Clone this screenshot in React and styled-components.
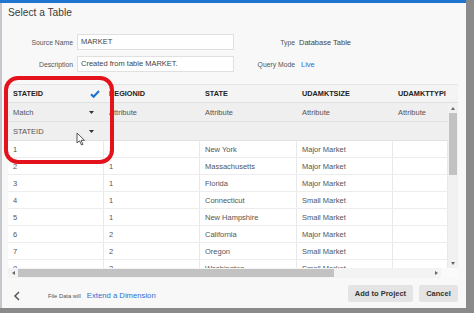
import React from "react";
import styled, { createGlobalStyle } from "styled-components";

const Global = createGlobalStyle`
  html, body { margin: 0; padding: 0; }
  body {
    background: #8a8a8a;
    font-family: "Liberation Sans", Arial, sans-serif;
    -webkit-font-smoothing: antialiased;
    overflow: hidden;
    width: 474px;
    height: 313px;
  }
  * { box-sizing: border-box; }
`;

const Frame = styled.div`
  position: relative;
  width: 466px;
  height: 308px;
  display: flex;
  flex-direction: column;
  background: #f8f8f8;
`;

const TopBar = styled.div`
  height: 3px;
  background: #1f74d0;
  flex: none;
`;

const Dialog = styled.div`
  flex: 1;
  display: flex;
  flex-direction: column;
  border-left: 2px solid #c6c7cc;
`;

const Title = styled.div`
  height: 20px;
  line-height: 20px;
  padding-left: 6px;
  font-size: 10.2px;
  color: #3a3a3a;
`;

const Form = styled.div`
  margin-top: 11px;
  display: grid;
  grid-template-columns: 71px 157px 57px 1fr;
  grid-auto-rows: 16px;
  column-gap: 4px;
  row-gap: 6px;
  align-items: center;
`;

const Label = styled.div`
  text-align: right;
  font-size: 6.8px;
  color: #555;
`;

const Input = styled.div`
  height: 16px;
  background: #fff;
  border: 1px solid #e0e0e0;
  font-size: 7.5px;
  color: #444;
  line-height: 14px;
  padding-left: 3px;
`;

const Value = styled.div`
  font-size: 7.5px;
  color: ${(p) => (p.$link ? "#2f6fd1" : "#444")};
  padding-left: ${(p) => (p.$link ? "2px" : "0")};
`;

const Table = styled.div`
  margin: 12px 0 0 6px;
  width: 450px;
  display: flex;
  flex-direction: column;
`;

const cols = "96px 96px 97px 96px 55px";

const HeaderRow = styled.div`
  display: flex;
  height: 19px;
  background: #f4f4f4;
  border-top: 1px solid #e6e6e6;
  border-bottom: 1px solid #e0e0e0;
`;

const HeaderGrid = styled.div`
  width: 440px;
  display: grid;
  grid-template-columns: ${cols};
  overflow: hidden;
`;

const HeaderCell = styled.div`
  display: flex;
  align-items: center;
  justify-content: space-between;
  padding: 0 4px 0 5px;
  font-size: 7.3px;
  font-weight: bold;
  color: #222;
  white-space: nowrap;
  overflow: hidden;
`;

const Body = styled.div`
  display: flex;
  height: 165px;
`;

const Rows = styled.div`
  width: 440px;
  overflow: hidden;
  background: #fff;
`;

const Row = styled.div`
  display: grid;
  grid-template-columns: ${cols};
  height: ${(p) => (p.$meta ? "19px" : "17px")};
  background: ${(p) => (p.$meta ? "#efefef" : "#fff")};
  border-bottom: 1px solid ${(p) => (p.$meta ? "#e2e2e2" : "#ededed")};
`;

const Cell = styled.div`
  display: flex;
  align-items: center;
  justify-content: space-between;
  padding: 0 9px 0 5px;
  font-size: 7.5px;
  color: #555;
  white-space: nowrap;
  overflow: hidden;
  border-right: 1px solid ${(p) => (p.$meta ? "transparent" : "#e8e8e8")};
`;

const VScroll = styled.div`
  width: 10px;
  background: #f1f1f1;
  display: flex;
  flex-direction: column;
  align-items: center;
`;

const ScrollArrow = styled.div`
  height: 10px;
  width: 10px;
  display: flex;
  align-items: center;
  justify-content: center;
  flex: none;
`;

const VTrack = styled.div`
  flex: 1;
  width: 100%;
  display: flex;
  flex-direction: column;
  align-items: center;
`;

const VThumb = styled.div`
  width: 8px;
  height: 62px;
  background: #c2c2c2;
`;

const HScroll = styled.div`
  display: flex;
  height: 10px;
  background: #f3f3f3;
  align-items: center;
`;

const HTrack = styled.div`
  flex: 1;
  height: 100%;
  display: flex;
  align-items: center;
`;

const HThumb = styled.div`
  width: 316px;
  height: 8px;
  background: #c2c2c2;
`;

const Corner = styled.div`
  width: 17px;
  height: 10px;
  background: #fafafa;
`;

const Footer = styled.div`
  flex: 1;
  display: flex;
  align-items: center;
  padding: 0 8px 0 11px;
`;

const Back = styled.div`
  width: 8px;
  height: 10px;
  margin-top: 5px;
  display: flex;
`;

const Note = styled.div`
  margin: 5px 0 0 27px;
  font-size: 5.8px;
  color: #555;
`;

const FooterLink = styled.div`
  margin: 5px 0 0 6px;
  font-size: 7.7px;
  color: #2f6fd1;
`;

const Buttons = styled.div`
  margin-left: auto;
  display: flex;
  gap: 6px;
`;

const Button = styled.div`
  width: ${(p) => p.$w}px;
  height: 17px;
  display: flex;
  align-items: center;
  justify-content: center;
  background: #e4e4e4;
  border-radius: 2px;
  font-size: 7.5px;
  font-weight: bold;
  color: #333;
`;

const Annotation = styled.div`
  position: absolute;
  left: 4px;
  top: 76px;
  width: 110px;
  height: 88px;
  border: 4px solid #e3121c;
  border-radius: 14px;
  pointer-events: none;
`;

const Pointer = styled.svg`
  position: absolute;
  left: 76px;
  top: 132px;
`;

const Caret = () => (
  <svg width="5" height="3" viewBox="0 0 5 3">
    <polygon points="0,0 5,0 2.5,3" fill="#333" />
  </svg>
);

const Check = () => (
  <svg width="10" height="8" viewBox="0 0 10 8">
    <polyline points="1,4.2 3.6,6.8 9,1" fill="none" stroke="#1f6fd0" strokeWidth="2" />
  </svg>
);

const Tri = ({ dir }) => {
  const pts = {
    up: "0,3 4,3 2,0",
    down: "0,0 4,0 2,3",
    left: "3,0 3,4 0,2",
    right: "0,0 0,4 3,2",
  }[dir];
  const w = dir === "up" || dir === "down" ? 4 : 3;
  const h = dir === "up" || dir === "down" ? 3 : 4;
  return (
    <svg width={w} height={h} viewBox={`0 0 ${w} ${h}`}>
      <polygon points={pts} fill="#666" />
    </svg>
  );
};

const data = [
  ["1", "1", "New York", "Major Market"],
  ["2", "1", "Massachusetts", "Major Market"],
  ["3", "1", "Florida", "Major Market"],
  ["4", "1", "Connecticut", "Small Market"],
  ["5", "1", "New Hampshire", "Small Market"],
  ["6", "2", "California", "Major Market"],
  ["7", "2", "Oregon", "Small Market"],
  ["8", "2", "Washington", "Small Market"],
];

export default function App() {
  return (
    <>
      <Global />
      <Frame>
        <TopBar />
        <Dialog>
          <Title>Select a Table</Title>
          <Form>
            <Label>Source Name</Label>
            <Input>MARKET</Input>
            <Label>Type</Label>
            <Value>Database Table</Value>
            <Label>Description</Label>
            <Input>Created from table MARKET.</Input>
            <Label>Query Mode</Label>
            <Value $link>Live</Value>
          </Form>
          <Table>
            <HeaderRow>
              <HeaderGrid>
                <HeaderCell>
                  STATEID
                  <Check />
                </HeaderCell>
                <HeaderCell>REGIONID</HeaderCell>
                <HeaderCell>STATE</HeaderCell>
                <HeaderCell>UDAMKTSIZE</HeaderCell>
                <HeaderCell>UDAMKTTYPI</HeaderCell>
              </HeaderGrid>
            </HeaderRow>
            <Body>
              <Rows>
                <Row $meta>
                  <Cell $meta>
                    Match
                    <Caret />
                  </Cell>
                  <Cell $meta>Attribute</Cell>
                  <Cell $meta>Attribute</Cell>
                  <Cell $meta>Attribute</Cell>
                  <Cell $meta>Attribute</Cell>
                </Row>
                <Row $meta>
                  <Cell $meta>
                    STATEID
                    <Caret />
                  </Cell>
                  <Cell $meta />
                  <Cell $meta />
                  <Cell $meta />
                  <Cell $meta />
                </Row>
                {data.map((r) => (
                  <Row key={r[0]}>
                    {r.map((c, i) => (
                      <Cell key={i}>{c}</Cell>
                    ))}
                    <Cell />
                  </Row>
                ))}
              </Rows>
              <VScroll>
                <ScrollArrow>
                  <Tri dir="up" />
                </ScrollArrow>
                <VTrack>
                  <VThumb />
                </VTrack>
                <ScrollArrow>
                  <Tri dir="down" />
                </ScrollArrow>
              </VScroll>
            </Body>
            <HScroll>
              <ScrollArrow>
                <Tri dir="left" />
              </ScrollArrow>
              <HTrack>
                <HThumb />
              </HTrack>
              <ScrollArrow>
                <Tri dir="right" />
              </ScrollArrow>
              <Corner />
            </HScroll>
          </Table>
          <Footer>
            <Back>
              <svg width="8" height="10" viewBox="0 0 8 10">
                <polyline points="6,1 2,5 6,9" fill="none" stroke="#555" strokeWidth="1.5" />
              </svg>
            </Back>
            <Note>File Data will</Note>
            <FooterLink>Extend a Dimension</FooterLink>
            <Buttons>
              <Button $w={65}>Add to Project</Button>
              <Button $w={39}>Cancel</Button>
            </Buttons>
          </Footer>
        </Dialog>
        <Annotation />
        <Pointer width="10" height="14" viewBox="0 0 10 14">
          <path d="M1,1 L1,11 L3.5,8.8 L5.5,13 L7,12.3 L5,8.3 L8.5,8.3 Z" fill="#fff" stroke="#444" strokeWidth="0.9" strokeLinejoin="round" />
        </Pointer>
      </Frame>
    </>
  );
}
